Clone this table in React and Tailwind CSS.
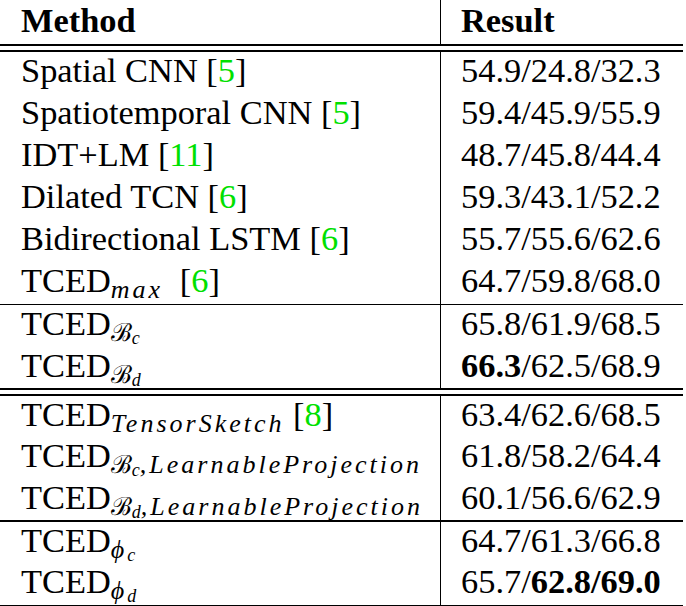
import React from "react";

const Ref = ({ n, wide }) => (
  <span className={wide ? "ml-[8px]" : ""}>
    [<span className="text-[#00e000]">{n}</span>]
  </span>
);

const Sub = ({ children }) => (
  <span className="align-[-6px] text-[26px] italic tracking-[3px]">{children}</span>
);

const SubSub = ({ children }) => (
  <span className="align-[-3px] text-[18px] italic tracking-normal">{children}</span>
);

const Cal = () => (
  <span className="not-italic [font-family:'DejaVu_Serif',serif] text-[25px] tracking-normal">ℬ</span>
);

const Rule = () => <div className="h-[1.5px] bg-black" />;

const DoubleRule = () => (
  <div className="flex flex-col">
    <Rule />
    <div className="h-[4.5px]" />
    <Rule />
  </div>
);

const Row = ({ left, right, h = "h-[42px]" }) => (
  <div className={`flex ${h}`}>
    <div className="w-[441px] pl-[21px] border-r-[1.5px] border-black whitespace-nowrap">{left}</div>
    <div className="flex-1 pl-[20px] whitespace-nowrap">{right}</div>
  </div>
);

const group1 = [
  [<>Spatial CNN <Ref n="5" /></>, "54.9/24.8/32.3"],
  [<>Spatiotemporal CNN <Ref n="5" /></>, "59.4/45.9/55.9"],
  [<>IDT+LM <Ref n="11" /></>, "48.7/45.8/44.4"],
  [<>Dilated TCN <Ref n="6" /></>, "59.3/43.1/52.2"],
  [<>Bidirectional LSTM <Ref n="6" /></>, "55.7/55.6/62.6"],
  [<>TCED<Sub>max</Sub> <Ref n="6" wide /></>, "64.7/59.8/68.0"],
];

const group2 = [
  [<>TCED<Sub><Cal /><SubSub>c</SubSub></Sub></>, "65.8/61.9/68.5"],
  [<>TCED<Sub><Cal /><SubSub>d</SubSub></Sub></>, <><b>66.3</b>/62.5/68.9</>],
];

const group3 = [
  [<>TCED<Sub>TensorSketch</Sub> <Ref n="8" /></>, "63.4/62.6/68.5"],
  [<>TCED<Sub><Cal /><SubSub>c</SubSub>,LearnableProjection</Sub></>, "61.8/58.2/64.4"],
  [<>TCED<Sub><Cal /><SubSub>d</SubSub>,LearnableProjection</Sub></>, "60.1/56.6/62.9"],
];

const group4 = [
  [<>TCED<Sub>ϕ<SubSub>c</SubSub></Sub></>, "64.7/61.3/66.8"],
  [<>TCED<Sub>ϕ<SubSub>d</SubSub></Sub></>, <>65.7/<b>62.8/69.0</b></>],
];

export default function App() {
  return (
    <div className="w-[686px] h-[606px] bg-white overflow-hidden">
      <div className="w-[683px] [font-family:'Liberation_Serif',serif] text-[34.4px] leading-[36px] text-black">
        <div className="flex h-[44px] font-bold">
          <div className="w-[441px] pl-[21px] pt-[2px] border-r-[1.5px] border-black">Method</div>
          <div className="flex-1 pl-[20px] pt-[2px]">Result</div>
        </div>
        <DoubleRule />
        {group1.map(([l, r], i) => (
          <Row key={i} left={l} right={r} />
        ))}
        <Rule />
        {group2.map(([l, r], i) => (
          <Row key={i} left={l} right={r} h="h-[41.5px]" />
        ))}
        <DoubleRule />
        {group3.map(([l, r], i) => (
          <Row key={i} left={l} right={r} h="h-[41.5px]" />
        ))}
        <Rule />
        {group4.map(([l, r], i) => (
          <Row key={i} left={l} right={r} h="h-[41.5px]" />
        ))}
        <Rule />
      </div>
    </div>
  );
}
